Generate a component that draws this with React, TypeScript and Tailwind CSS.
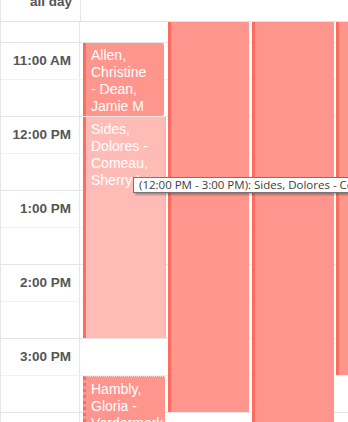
import React from "react";

type Slot = { label?: string; hour: boolean };

// visible slots, starting at the 10:30 half-hour (partly scrolled out)
const slots: Slot[] = [
  { hour: true },
  { label: "11:00 AM", hour: false },
  { hour: true },
  { label: "12:00 PM", hour: false },
  { hour: true },
  { label: "1:00 PM", hour: false },
  { hour: true },
  { label: "2:00 PM", hour: false },
  { hour: true },
  { label: "3:00 PM", hour: false },
  { hour: true },
  { label: "4:00 PM", hour: false },
  { hour: true },
];

function EventBox({
  className,
  text,
}: {
  className: string;
  text?: string;
}) {
  return (
    <div
      className={
        "absolute overflow-hidden border-l-[3px] border-[#ff6b5f] pl-[5px] pr-[13px] pt-[4px] text-[14px] leading-[17px] text-white " +
        className
      }
    >
      {text}
    </div>
  );
}

export default function App() {
  return (
    <div
      className="relative h-[422px] w-[348px] overflow-hidden border-l border-[#e6e6e6] bg-white"
      style={{ fontFamily: '"Liberation Sans", Arial, sans-serif' }}
    >
      {/* all day header */}
      <div className="flex h-[22px] border-b border-[#e2e2e2]">
        <div className="w-[80px] flex-none overflow-hidden border-r border-[#e6e6e6] pr-2 text-right">
          <div className="-mt-[6px] text-[13.5px] font-bold leading-[16px] text-[#555]">all day</div>
        </div>
        <div className="flex-1" />
      </div>

      {/* time grid */}
      <div className="relative h-[400px] overflow-hidden">
        <div className="-mt-[16px]">
          {slots.map((s, i) => (
            <div
              key={i}
              className={
                "flex h-[37px] border-b " +
                (s.hour ? "border-[#e6e6e6]" : "border-[#f1f1f1]")
              }
            >
              <div className="w-[79px] flex-none border-r border-[#e6e6e6] pr-2 pt-[10px] text-right text-[13.5px] font-bold leading-[16px] text-[#555]">
                {s.label}
              </div>
              <div className="flex-1" />
            </div>
          ))}
        </div>

        {/* events */}
        <EventBox className="left-[82px] top-[21px] h-[73px] w-[81px] rounded-r-[2px] bg-[#ff968e]" text="Allen, Christine - Dean, Jamie M" />
        <EventBox
          className="left-[82px] top-[95px] h-[221px] w-[83px] border-r border-r-[#ffa9a3] bg-[#ffbcb7]"
          text="Sides, Dolores - Comeau, Sherry L"
        />
        <EventBox
          className="left-[82px] top-[354px] h-[60px] w-[82px] border-t border-dotted border-t-[#ffd2ce] bg-[#ff968e]"
          text="Hambly, Gloria - Verdermark, Anne"
        />
        <EventBox className="left-[167px] top-0 h-[390px] w-[81px] bg-[#ff968e]" />
        <EventBox className="left-[251px] top-0 h-[420px] w-[82px] bg-[#ff968e]" />
        <EventBox className="left-[335px] top-0 h-[353px] w-[20px] bg-[#ff968e]" />
      </div>

      {/* native tooltip */}
      <div
        className="absolute left-[132px] top-[177px] h-[16px] whitespace-nowrap border border-[#767676] bg-white pl-[5px] pr-2 text-[11.5px] leading-[14px] text-[#3c3c3c] shadow-[2px_2px_2px_rgba(0,0,0,0.3)]"
        style={{ fontFamily: '"Open Sans", "Liberation Sans", sans-serif' }}
      >
        (12:00 PM - 3:00 PM): Sides, Dolores - Comeau, Sherry L
      </div>
    </div>
  );
}
